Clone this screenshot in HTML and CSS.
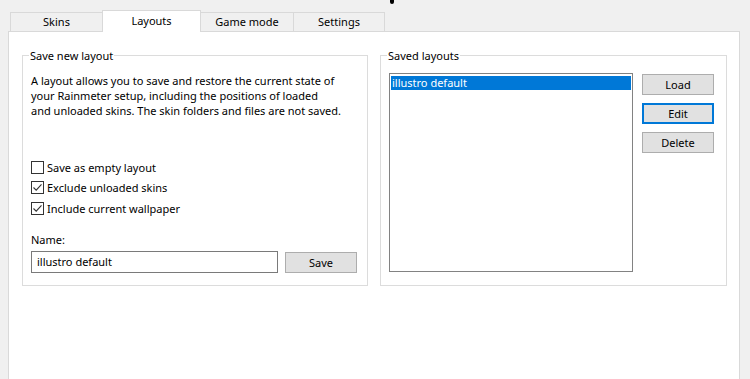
FILE: index.html
```html
<!DOCTYPE html>
<html lang="en">
<head>
<meta charset="UTF-8" />
<title>Rainmeter - Layouts</title>
<link rel="stylesheet" href="styles.css">
</head>
<body>

  <!-- mouse cursor tip at the top edge -->
  <span class="cursor-dot"></span>

  <!-- Tabs -->
  <div class="tabs">
    <div class="tab tab-skins">Skins</div>
    <div class="tab tab-active">Layouts</div>
    <div class="tab tab-game">Game mode</div>
    <div class="tab tab-settings">Settings</div>
  </div>

  <!-- Tab page -->
  <div class="panel">

    <fieldset class="group group-left">
      <legend>Save new layout</legend>
      <p class="desc">
        A layout allows you to save and restore the current state of<br>
        your Rainmeter setup, including the positions of loaded<br>
        and unloaded skins. The skin folders and files are not saved.
      </p>

      <div class="checks">
        <label class="check"><span class="box"></span>Save as empty layout</label>
        <label class="check"><span class="box checked"><svg viewBox="0 0 11 11" width="11" height="11"><path d="M1.5 5.5 L4.2 8.2 L9.5 2.4" fill="none" stroke="#333" stroke-width="1.1"/></svg></span>Exclude unloaded skins</label>
        <label class="check"><span class="box checked"><svg viewBox="0 0 11 11" width="11" height="11"><path d="M1.5 5.5 L4.2 8.2 L9.5 2.4" fill="none" stroke="#333" stroke-width="1.1"/></svg></span>Include current wallpaper</label>
      </div>

      <div class="name-label">Name:</div>
      <div class="name-row">
        <div class="textbox">illustro default</div>
        <button class="btn btn-save">Save</button>
      </div>
    </fieldset>

    <fieldset class="group group-right">
      <legend>Saved layouts</legend>
      <div class="saved-row">
        <div class="listbox">
          <div class="list-item selected">illustro default</div>
        </div>
        <div class="buttons">
          <button class="btn">Load</button>
          <button class="btn btn-default">Edit</button>
          <button class="btn">Delete</button>
        </div>
      </div>
    </fieldset>

  </div>

</body>
</html>
```

FILE: styles.css
```css
:root {
  --bg: #f0f0f0;
  --white: #ffffff;
  --tab-border: #d9d9d9;
  --group-border: #dcdcdc;
  --blue: #0078d7;
  --btn: #e1e1e1;
  --btn-border: #adadad;
}

body {
  font-family: 'Noto Sans', 'Segoe UI', sans-serif;
  font-size: 11px;
  line-height: 15px;
  color: #000;
  background: var(--bg);
  margin: 0;
  padding: 0;
  height: 379px;
  overflow: hidden;
}

.cursor-dot {
  position: absolute;
  left: 390px;
  top: 0;
  width: 4px;
  height: 4px;
  border-radius: 0 0 2px 2px;
  background: #000;
}

/* tab strip */
.tabs {
  display: flex;
  align-items: flex-end;
  height: 21px;
  padding: 10px 0 0 10px;
}

.tab {
  box-sizing: border-box;
  height: 19px;
  line-height: 18px;
  text-align: center;
  background: var(--bg);
  border: 1px solid var(--tab-border);
  border-bottom: none;
  margin-left: -1px;
}

.tab-skins { width: 93px; margin-left: 0; }
.tab-game { width: 94px; }
.tab-settings { width: 92px; }

.tab-active {
  position: relative;
  z-index: 1;
  width: 99px;
  height: 22px;
  line-height: 20px;
  margin-bottom: -1px;
  background: var(--white);
}

/* tab page */
.panel {
  display: flex;
  gap: 12px;
  height: 360px;
  margin: 0 10px 0 8px;
  padding: 16px 11px 0 13px;
  background: var(--white);
  border: 1px solid var(--tab-border);
  box-sizing: border-box;
}

.group {
  margin: 0;
  min-width: 0;
  flex-shrink: 0;
  height: 238px;
  box-sizing: border-box;
  border: 1px solid var(--group-border);
  padding: 10px 8px 0 8px;
}

.group legend {
  padding: 0 1px;
  margin-left: -2px;
}

.group-left { width: 346px; }
.group-right { width: 347px; }

.desc {
  margin: 0;
  white-space: nowrap;
}

.checks {
  display: flex;
  flex-direction: column;
  margin-top: 39px;
}

.check {
  display: flex;
  align-items: center;
  height: 20px;
}

.check + .check { margin-top: 0.5px; }

.box {
  width: 11px;
  height: 11px;
  border: 1px solid #333;
  margin-right: 3px;
  display: flex;
  align-items: center;
  justify-content: center;
}

.name-label {
  margin-top: 14px;
  height: 15px;
}

.name-row {
  display: flex;
  align-items: center;
  gap: 7px;
  margin-top: 4px;
}

.textbox {
  width: 247px;
  height: 22px;
  line-height: 20px;
  box-sizing: border-box;
  border: 1px solid #7a7a7a;
  padding: 0 5px;
}

.btn {
  font: inherit;
  color: #000;
  width: 72px;
  height: 21px;
  padding: 0;
  background: var(--btn);
  border: 1px solid var(--btn-border);
  border-radius: 0;
}

.btn-default {
  border-color: var(--blue);
  box-shadow: inset 0 0 0 1px var(--blue);
}

.saved-row {
  display: flex;
  gap: 9px;
}

.listbox {
  width: 244px;
  height: 199px;
  box-sizing: border-box;
  border: 1px solid #828282;
  padding: 2px 1px;
}

.list-item {
  height: 14px;
  line-height: 14px;
  padding-left: 1px;
}

.list-item.selected {
  background: var(--blue);
  color: var(--white);
}

.buttons {
  display: flex;
  flex-direction: column;
  gap: 8px;
  padding-top: 1px;
}
```
